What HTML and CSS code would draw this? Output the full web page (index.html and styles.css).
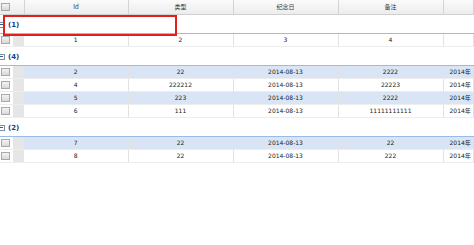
FILE: index.html
```html
<!DOCTYPE html>
<html lang="en">
<head>
    <meta charset="UTF-8">
    <title>Grid</title>
    <link rel="stylesheet" href="styles.css">
</head>
<body>
    <div class="grid-wrap">
        <table class="grid">
            <colgroup>
                <col class="c-check">
                <col class="c-id">
                <col class="c-data">
                <col class="c-data">
                <col class="c-data">
                <col>
            </colgroup>
            <thead>
                <tr>
                    <th class="check"><span class="box"></span></th>
                    <th>Id</th>
                    <th>类型</th>
                    <th>纪念日</th>
                    <th>备注</th>
                    <th></th>
                </tr>
            </thead>
            <tbody>
                <tr class="group">
                    <td colspan="6"><span class="toggle"></span>(1)</td>
                </tr>
                <tr>
                    <td class="check"><span class="box"></span></td>
                    <td>1</td><td>2</td><td>3</td><td>4</td><td></td>
                </tr>

                <tr class="group">
                    <td colspan="6"><span class="toggle"></span>(4)</td>
                </tr>
                <tr class="alt">
                    <td class="check"><span class="box"></span></td>
                    <td>2</td><td>22</td><td>2014-08-13</td><td>2222</td><td class="last">2014年</td>
                </tr>
                <tr>
                    <td class="check"><span class="box"></span></td>
                    <td>4</td><td>222212</td><td>2014-08-13</td><td>22223</td><td class="last">2014年</td>
                </tr>
                <tr class="alt">
                    <td class="check"><span class="box"></span></td>
                    <td>5</td><td>223</td><td>2014-08-13</td><td>2222</td><td class="last">2014年</td>
                </tr>
                <tr>
                    <td class="check"><span class="box"></span></td>
                    <td>6</td><td>111</td><td>2014-08-13</td><td>11111111111</td><td class="last">2014年</td>
                </tr>

                <tr class="group">
                    <td colspan="6"><span class="toggle"></span>(2)</td>
                </tr>
                <tr class="alt">
                    <td class="check"><span class="box"></span></td>
                    <td>7</td><td>22</td><td>2014-08-13</td><td>22</td><td class="last">2014年</td>
                </tr>
                <tr>
                    <td class="check"><span class="box"></span></td>
                    <td>8</td><td>22</td><td>2014-08-13</td><td>222</td><td class="last">2014年</td>
                </tr>
            </tbody>
        </table>
        <div class="mark"></div>
    </div>
</body>
</html>
```

FILE: styles.css
```css
* {
    margin: 0;
    padding: 0;
    box-sizing: border-box;
}

body {
    font-family: 'DejaVu Sans', Tahoma, sans-serif;
    background: #fff;
    color: #222;
}

.grid-wrap {
    position: relative;
    width: 474px;
    overflow: hidden;
}

.grid {
    border-collapse: collapse;
    table-layout: fixed;
    width: 474px;
    font-size: 6px;
}

.c-check { width: 24px; }
.c-id { width: 104px; }
.c-data { width: 105px; }

.grid th {
    height: 14px;
    font-weight: normal;
    font-family: 'Noto Sans CJK SC', 'DejaVu Sans', sans-serif;
    font-size: 6px;
    color: #333;
    background: linear-gradient(#fafafa, #ececec);
    border-right: 1px solid #d4d4d4;
    border-bottom: 1px solid #d0d0d0;
    text-align: center;
}

.grid td {
    height: 13px;
    text-align: center;
    color: #222;
    border-right: 1px solid #e2e2e2;
    border-bottom: 1px solid #ededed;
    white-space: nowrap;
    overflow: hidden;
}

.grid td.last {
    text-align: left;
    padding-left: 6px;
    font-family: 'DejaVu Sans', 'Noto Sans CJK SC', sans-serif;
}

.grid tr.alt td {
    background: #d9e5f4;
}

.grid td.check,
.grid tr.alt td.check {
    text-align: left;
    background: linear-gradient(to right, #fff 55%, #e6e6e6 55%);
    border-right: none;
}

.grid th.check {
    text-align: left;
    border-right: 1px solid #d4d4d4;
}

.box {
    display: inline-block;
    width: 9px;
    height: 8px;
    margin-left: 1px;
    vertical-align: middle;
    border: 1px solid #a9a9a9;
    background: linear-gradient(#f4f4f4, #d8d8d8);
}

.grid tr.group td {
    height: 19px;
    text-align: left;
    padding-top: 3px;
    font-size: 7px;
    font-weight: bold;
    color: #15428b;
    border-right: none;
    border-bottom: 1px solid #99bbe8;
    background: #fff;
}

.toggle {
    display: inline-block;
    position: relative;
    width: 7px;
    height: 6px;
    margin-left: -2px;
    margin-right: 3px;
    vertical-align: -1px;
    border: 1px solid #7a8fa8;
    background: #fff;
}

.toggle::after {
    content: "";
    position: absolute;
    left: 1px;
    right: 1px;
    top: 1px;
    height: 1px;
    background: #3a5a86;
}

.mark {
    position: absolute;
    left: 3px;
    top: 15px;
    width: 174px;
    height: 21px;
    border: 2px solid #e0201e;
}
```
